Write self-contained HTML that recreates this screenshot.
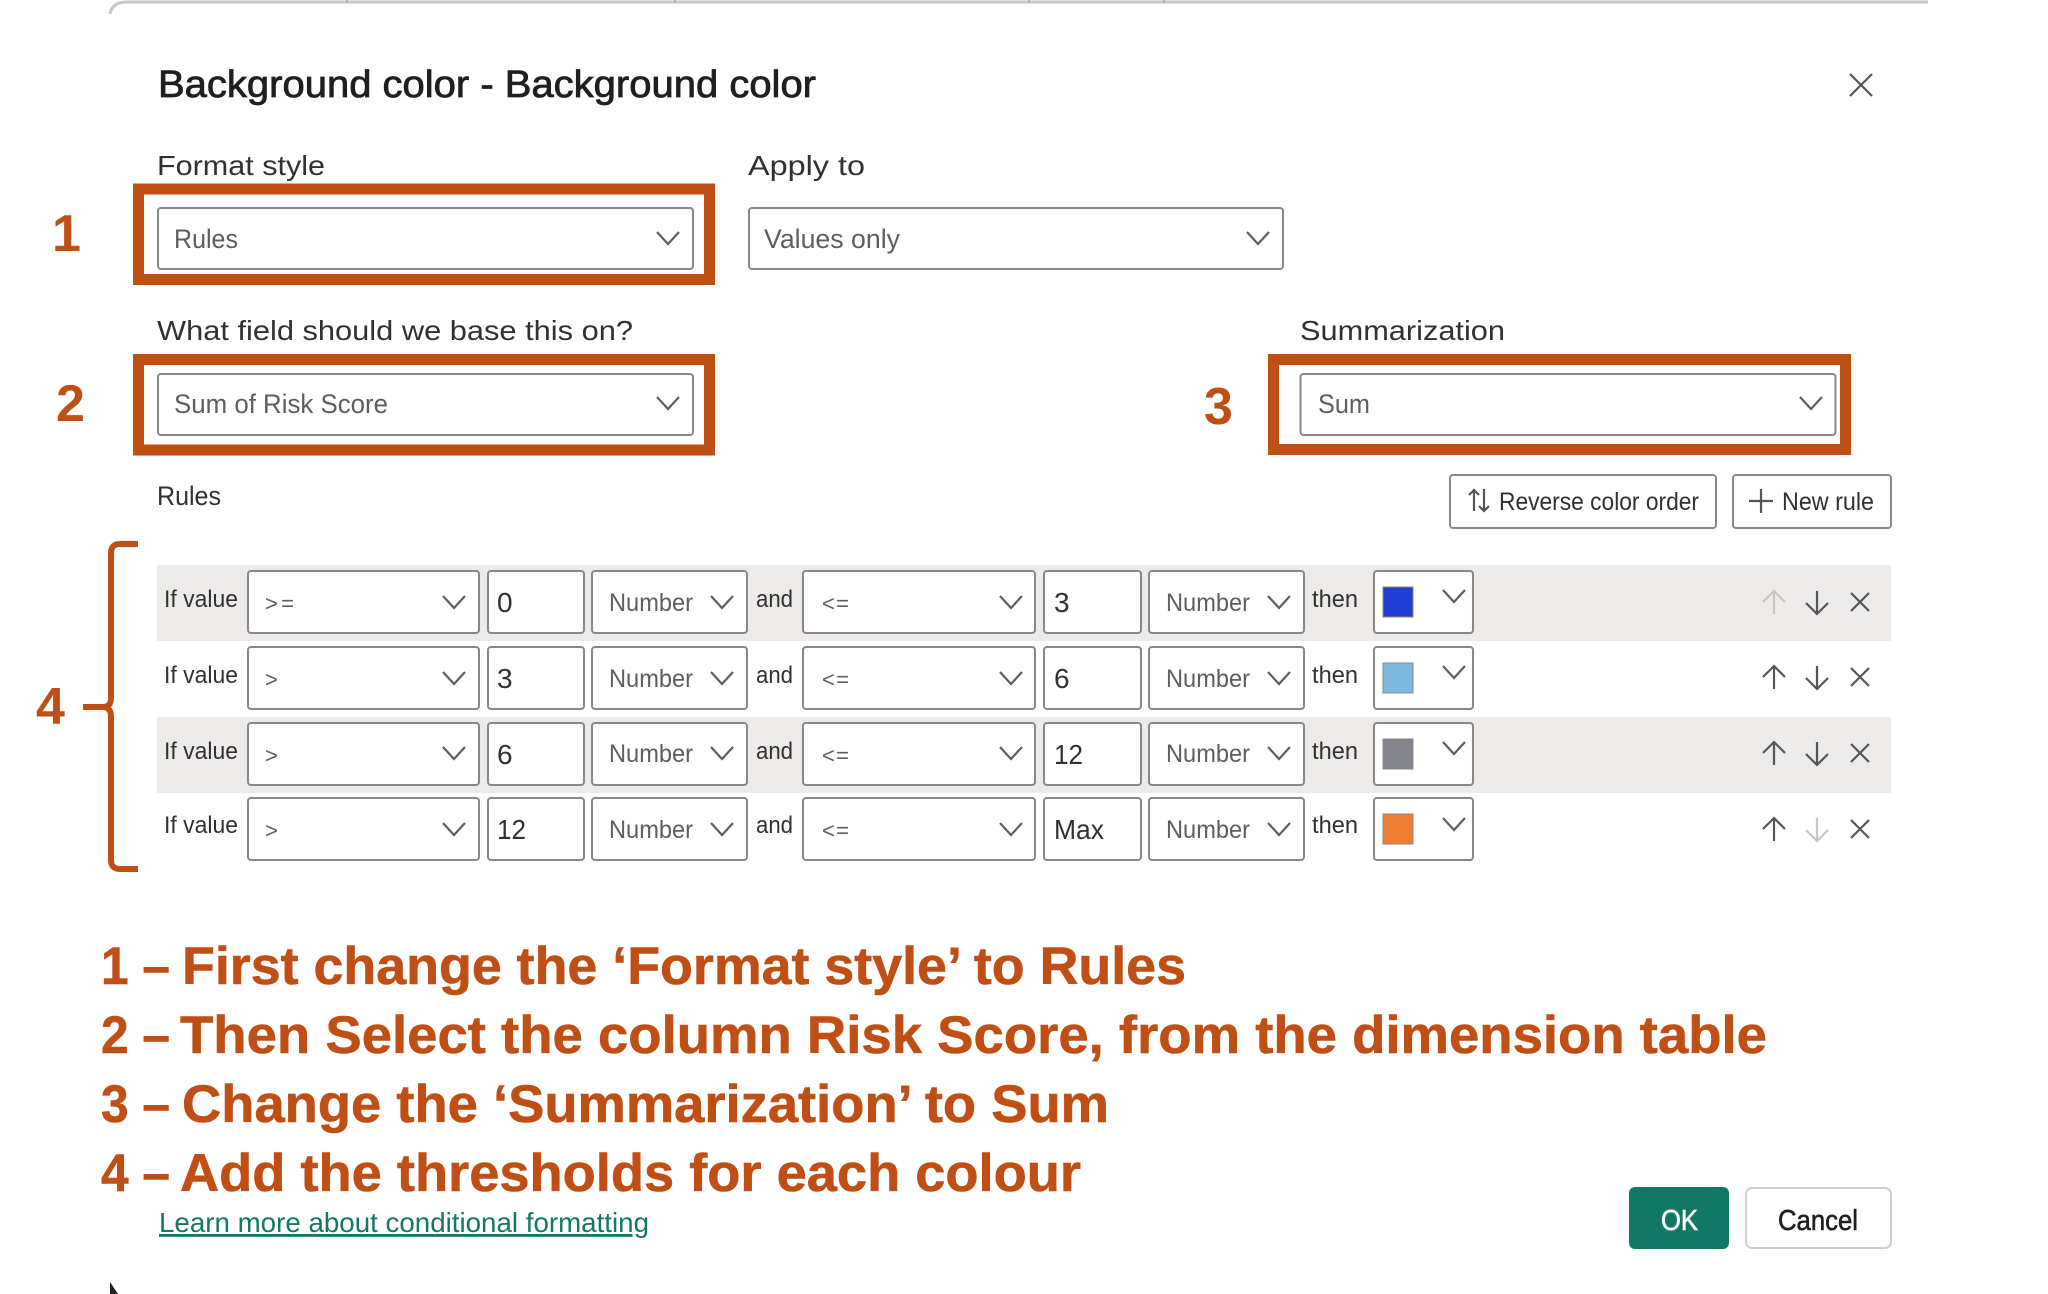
<!DOCTYPE html>
<html><head><meta charset="utf-8"><title>Background color</title>
<style>
html,body{margin:0;padding:0;background:#fff;width:2048px;height:1294px;overflow:hidden}
svg{display:block}
text{font-family:"Liberation Sans",sans-serif;white-space:pre}
.l{font-size:28px;fill:#323130}
.g{font-size:27px;fill:#605e5c}
.s{font-size:24px;fill:#323130}
.n{font-size:25px;fill:#605e5c}
.o{font-size:22px;fill:#605e5c}
.v{font-size:28px;fill:#323130}
.h{font-size:53px;font-weight:700;fill:#c04f15;stroke:#c04f15;stroke-width:.6}
.d{font-size:52px;font-weight:700;fill:#c04f15}
.f{fill:#fff;stroke:#8a8886;stroke-width:2}
.c{fill:none;stroke:#605e5c;stroke-width:2.2}
.a{fill:none;stroke:#555;stroke-width:2.2}
.z{fill:none;stroke:#c8c6c4;stroke-width:2.2}
.b{fill:none;stroke:#c04f15;stroke-width:11}
</style></head><body>
<svg width="2048" height="1294" viewBox="0 0 2048 1294" xmlns="http://www.w3.org/2000/svg">
<rect width="2048" height="1294" fill="#fff"/>
<path d="M110 14Q112 2 127 2H1928" fill="none" stroke="#c8c8c8" stroke-width="3"/>
<path d="M347 0v3M675 0v3M1029 0v3M1164 0v3" stroke="#aaa" stroke-width="1.5"/>
<path d="M110 1294V1282L118 1294Z" fill="#222"/>

<text x="158" y="97" font-size="38" fill="#201f1e" textLength="658" lengthAdjust="spacingAndGlyphs" stroke="#201f1e" stroke-width=".8">Background color - Background color</text>
<path d="M1850 74l22 22M1872 74l-22 22" class="a"/>

<text class="l" x="157" y="175" textLength="168" lengthAdjust="spacingAndGlyphs">Format style</text>
<text class="l" x="748" y="175" textLength="117" lengthAdjust="spacingAndGlyphs">Apply to</text>
<text class="l" x="157" y="340" textLength="476" lengthAdjust="spacingAndGlyphs">What field should we base this on?</text>
<text class="l" x="1300" y="340" textLength="205" lengthAdjust="spacingAndGlyphs">Summarization</text>

<rect class="b" x="138.500" y="189" width="571" height="90.500"/>
<rect class="b" x="138.500" y="359.500" width="571" height="90.500"/>
<rect class="b" x="1273.500" y="359.500" width="572" height="90"/>

<rect class="f" x="158" y="208" width="535" height="61" rx="3"/>
<text class="g" x="174" y="248" textLength="64" lengthAdjust="spacingAndGlyphs">Rules</text>
<path class="c" d="M657 232l11 12 11-12"/>
<rect class="f" x="749" y="208" width="534" height="61" rx="3"/>
<text class="g" x="764" y="248" textLength="136" lengthAdjust="spacingAndGlyphs">Values only</text>
<path class="c" d="M1247 232l11 12 11-12"/>
<rect class="f" x="158" y="374" width="535" height="61" rx="3"/>
<text class="g" x="174" y="413" textLength="214" lengthAdjust="spacingAndGlyphs">Sum of Risk Score</text>
<path class="c" d="M657 397l11 12 11-12"/>
<rect class="f" x="1300.500" y="374" width="535" height="61" rx="3"/>
<text class="g" x="1318" y="413" textLength="52" lengthAdjust="spacingAndGlyphs">Sum</text>
<path class="c" d="M1800 397l11 12 11-12"/>

<text class="d" x="52" y="251">1</text>
<text class="d" x="56" y="421">2</text>
<text class="d" x="1204" y="424">3</text>
<text class="d" x="36" y="724">4</text>

<text x="157" y="505" font-size="27" fill="#323130" textLength="64" lengthAdjust="spacingAndGlyphs">Rules</text>

<rect class="f" x="1450" y="475" width="266" height="53" rx="3"/>
<path d="M1474 511V490M1469 495l5-5 5 5M1484 489v22M1479 506l5 5 5-5" class="a"/>
<text class="s" x="1499" y="510" style="font-size:25px" textLength="200" lengthAdjust="spacingAndGlyphs">Reverse color order</text>
<rect class="f" x="1733" y="475" width="158" height="53" rx="3"/>
<path d="M1761 489v24M1749 501h24" class="a"/>
<text class="s" x="1782" y="510" style="font-size:25px" textLength="92" lengthAdjust="spacingAndGlyphs">New rule</text>

<rect x="157" y="565" width="1734" height="76" fill="#edebe9"/>
<rect x="157" y="717" width="1734" height="76" fill="#edebe9"/>

<!-- row 1 -->
<g transform="translate(0,571)">
<text class="s" x="164" y="36" textLength="74" lengthAdjust="spacingAndGlyphs">If value</text>
<rect class="f" x="248" y="0" width="231" height="62" rx="3"/><text class="o" x="265" y="40" textLength="29" lengthAdjust="spacing">&gt;=</text><path class="c" d="M443 25l11 12 11-12"/>
<rect class="f" x="488" y="0" width="96" height="62" rx="3"/><text class="v" x="497" y="41">0</text>
<rect class="f" x="592" y="0" width="155" height="62" rx="3"/><text class="n" x="609" y="40" textLength="84" lengthAdjust="spacingAndGlyphs">Number</text><path class="c" d="M711 25l11 12 11-12"/>
<text class="s" x="756" y="36" textLength="37" lengthAdjust="spacingAndGlyphs">and</text>
<rect class="f" x="803" y="0" width="232" height="62" rx="3"/><text class="o" x="822" y="40" textLength="27" lengthAdjust="spacing">&lt;=</text><path class="c" d="M1000 25l11 12 11-12"/>
<rect class="f" x="1044" y="0" width="97" height="62" rx="3"/><text class="v" x="1054" y="41">3</text>
<rect class="f" x="1149" y="0" width="155" height="62" rx="3"/><text class="n" x="1166" y="40" textLength="84" lengthAdjust="spacingAndGlyphs">Number</text><path class="c" d="M1268 25l11 12 11-12"/>
<text class="s" x="1312" y="36" textLength="46" lengthAdjust="spacingAndGlyphs">then</text>
<rect class="f" x="1374" y="0" width="99" height="62" rx="3"/><rect x="1383" y="16" width="30" height="30" fill="#1f3fd4" stroke="#8a8886"/><path class="c" d="M1443 19l11 12 11-12"/>
<path class="z" d="M1774 43V20M1763 31l11-11 11 11"/><path class="a" d="M1817 20v23M1806 32l11 11 11-11"/><path class="a" d="M1851 22l18 18M1869 22l-18 18"/>
</g>
<!-- row 2 -->
<g transform="translate(0,647)">
<text class="s" x="164" y="36" textLength="74" lengthAdjust="spacingAndGlyphs">If value</text>
<rect class="f" x="248" y="0" width="231" height="62" rx="3"/><text class="o" x="265" y="40">&gt;</text><path class="c" d="M443 25l11 12 11-12"/>
<rect class="f" x="488" y="0" width="96" height="62" rx="3"/><text class="v" x="497" y="41">3</text>
<rect class="f" x="592" y="0" width="155" height="62" rx="3"/><text class="n" x="609" y="40" textLength="84" lengthAdjust="spacingAndGlyphs">Number</text><path class="c" d="M711 25l11 12 11-12"/>
<text class="s" x="756" y="36" textLength="37" lengthAdjust="spacingAndGlyphs">and</text>
<rect class="f" x="803" y="0" width="232" height="62" rx="3"/><text class="o" x="822" y="40" textLength="27" lengthAdjust="spacing">&lt;=</text><path class="c" d="M1000 25l11 12 11-12"/>
<rect class="f" x="1044" y="0" width="97" height="62" rx="3"/><text class="v" x="1054" y="41">6</text>
<rect class="f" x="1149" y="0" width="155" height="62" rx="3"/><text class="n" x="1166" y="40" textLength="84" lengthAdjust="spacingAndGlyphs">Number</text><path class="c" d="M1268 25l11 12 11-12"/>
<text class="s" x="1312" y="36" textLength="46" lengthAdjust="spacingAndGlyphs">then</text>
<rect class="f" x="1374" y="0" width="99" height="62" rx="3"/><rect x="1383" y="16" width="30" height="30" fill="#7db8e0" stroke="#8a8886"/><path class="c" d="M1443 19l11 12 11-12"/>
<path class="a" d="M1774 42V19M1763 30l11-11 11 11"/><path class="a" d="M1817 19v23M1806 31l11 11 11-11"/><path class="a" d="M1851 21l18 18M1869 21l-18 18"/>
</g>
<!-- row 3 -->
<g transform="translate(0,723)">
<text class="s" x="164" y="36" textLength="74" lengthAdjust="spacingAndGlyphs">If value</text>
<rect class="f" x="248" y="0" width="231" height="62" rx="3"/><text class="o" x="265" y="40">&gt;</text><path class="c" d="M443 24l11 12 11-12"/>
<rect class="f" x="488" y="0" width="96" height="62" rx="3"/><text class="v" x="497" y="41">6</text>
<rect class="f" x="592" y="0" width="155" height="62" rx="3"/><text class="n" x="609" y="39" textLength="84" lengthAdjust="spacingAndGlyphs">Number</text><path class="c" d="M711 24l11 12 11-12"/>
<text class="s" x="756" y="36" textLength="37" lengthAdjust="spacingAndGlyphs">and</text>
<rect class="f" x="803" y="0" width="232" height="62" rx="3"/><text class="o" x="822" y="40" textLength="27" lengthAdjust="spacing">&lt;=</text><path class="c" d="M1000 24l11 12 11-12"/>
<rect class="f" x="1044" y="0" width="97" height="62" rx="3"/><text class="v" x="1054" y="41" textLength="29" lengthAdjust="spacingAndGlyphs">12</text>
<rect class="f" x="1149" y="0" width="155" height="62" rx="3"/><text class="n" x="1166" y="39" textLength="84" lengthAdjust="spacingAndGlyphs">Number</text><path class="c" d="M1268 24l11 12 11-12"/>
<text class="s" x="1312" y="36" textLength="46" lengthAdjust="spacingAndGlyphs">then</text>
<rect class="f" x="1374" y="0" width="99" height="62" rx="3"/><rect x="1383" y="16" width="30" height="30" fill="#85858c" stroke="#8a8886"/><path class="c" d="M1443 19l11 12 11-12"/>
<path class="a" d="M1774 42V19M1763 30l11-11 11 11"/><path class="a" d="M1817 19v23M1806 31l11 11 11-11"/><path class="a" d="M1851 21l18 18M1869 21l-18 18"/>
</g>
<!-- row 4 -->
<g transform="translate(0,798)">
<text class="s" x="164" y="35" textLength="74" lengthAdjust="spacingAndGlyphs">If value</text>
<rect class="f" x="248" y="0" width="231" height="62" rx="3"/><text class="o" x="265" y="40">&gt;</text><path class="c" d="M443 25l11 12 11-12"/>
<rect class="f" x="488" y="0" width="96" height="62" rx="3"/><text class="v" x="497" y="41" textLength="29" lengthAdjust="spacingAndGlyphs">12</text>
<rect class="f" x="592" y="0" width="155" height="62" rx="3"/><text class="n" x="609" y="40" textLength="84" lengthAdjust="spacingAndGlyphs">Number</text><path class="c" d="M711 25l11 12 11-12"/>
<text class="s" x="756" y="35" textLength="37" lengthAdjust="spacingAndGlyphs">and</text>
<rect class="f" x="803" y="0" width="232" height="62" rx="3"/><text class="o" x="822" y="40" textLength="27" lengthAdjust="spacing">&lt;=</text><path class="c" d="M1000 25l11 12 11-12"/>
<rect class="f" x="1044" y="0" width="97" height="62" rx="3"/><text class="v" x="1054" y="41" textLength="50" lengthAdjust="spacingAndGlyphs">Max</text>
<rect class="f" x="1149" y="0" width="155" height="62" rx="3"/><text class="n" x="1166" y="40" textLength="84" lengthAdjust="spacingAndGlyphs">Number</text><path class="c" d="M1268 25l11 12 11-12"/>
<text class="s" x="1312" y="35" textLength="46" lengthAdjust="spacingAndGlyphs">then</text>
<rect class="f" x="1374" y="0" width="99" height="62" rx="3"/><rect x="1383" y="16" width="30" height="30" fill="#ed7d31" stroke="#8a8886"/><path class="c" d="M1443 20l11 12 11-12"/>
<path class="a" d="M1774 43V20M1763 31l11-11 11 11"/><path class="z" d="M1817 20v23M1806 32l11 11 11-11"/><path class="a" d="M1851 22l18 18M1869 22l-18 18"/>
</g>

<path d="M138 544H120Q111 544 111 553V698Q111 707 103 707H83M103 707Q111 707 111 717V860Q111 869 120 869H138" fill="none" stroke="#c04f15" stroke-width="6"/>

<text class="h" x="101" y="984" textLength="69" lengthAdjust="spacingAndGlyphs">1 –</text>
<text class="h" x="182" y="984" textLength="1004" lengthAdjust="spacingAndGlyphs">First change the ‘Format style’ to Rules</text>
<text class="h" x="101" y="1053" textLength="69" lengthAdjust="spacingAndGlyphs">2 –</text>
<text class="h" x="180" y="1053" textLength="1587" lengthAdjust="spacingAndGlyphs">Then Select the column Risk Score, from the dimension table</text>
<text class="h" x="101" y="1122" textLength="69" lengthAdjust="spacingAndGlyphs">3 –</text>
<text class="h" x="182" y="1122" textLength="927" lengthAdjust="spacingAndGlyphs">Change the ‘Summarization’ to Sum</text>
<text class="h" x="101" y="1191" textLength="69" lengthAdjust="spacingAndGlyphs">4 –</text>
<text class="h" x="180" y="1191" textLength="901" lengthAdjust="spacingAndGlyphs">Add the thresholds for each colour</text>

<text x="159" y="1232" font-size="28" fill="#117865" text-decoration="underline" textLength="490" lengthAdjust="spacingAndGlyphs">Learn more about conditional formatting</text>

<rect x="1629" y="1187" width="100" height="62" rx="6" fill="#117865"/>
<text x="1661" y="1230" font-size="29" fill="#fff" stroke="#fff" stroke-width=".6" textLength="37" lengthAdjust="spacingAndGlyphs">OK</text>
<rect x="1746" y="1188" width="145" height="60" rx="6" fill="#fff" stroke="#d2d0ce" stroke-width="2"/>
<text x="1778" y="1230" font-size="29" fill="#201f1e" stroke="#201f1e" stroke-width=".6" textLength="80" lengthAdjust="spacingAndGlyphs">Cancel</text>
</svg>
</body></html>
